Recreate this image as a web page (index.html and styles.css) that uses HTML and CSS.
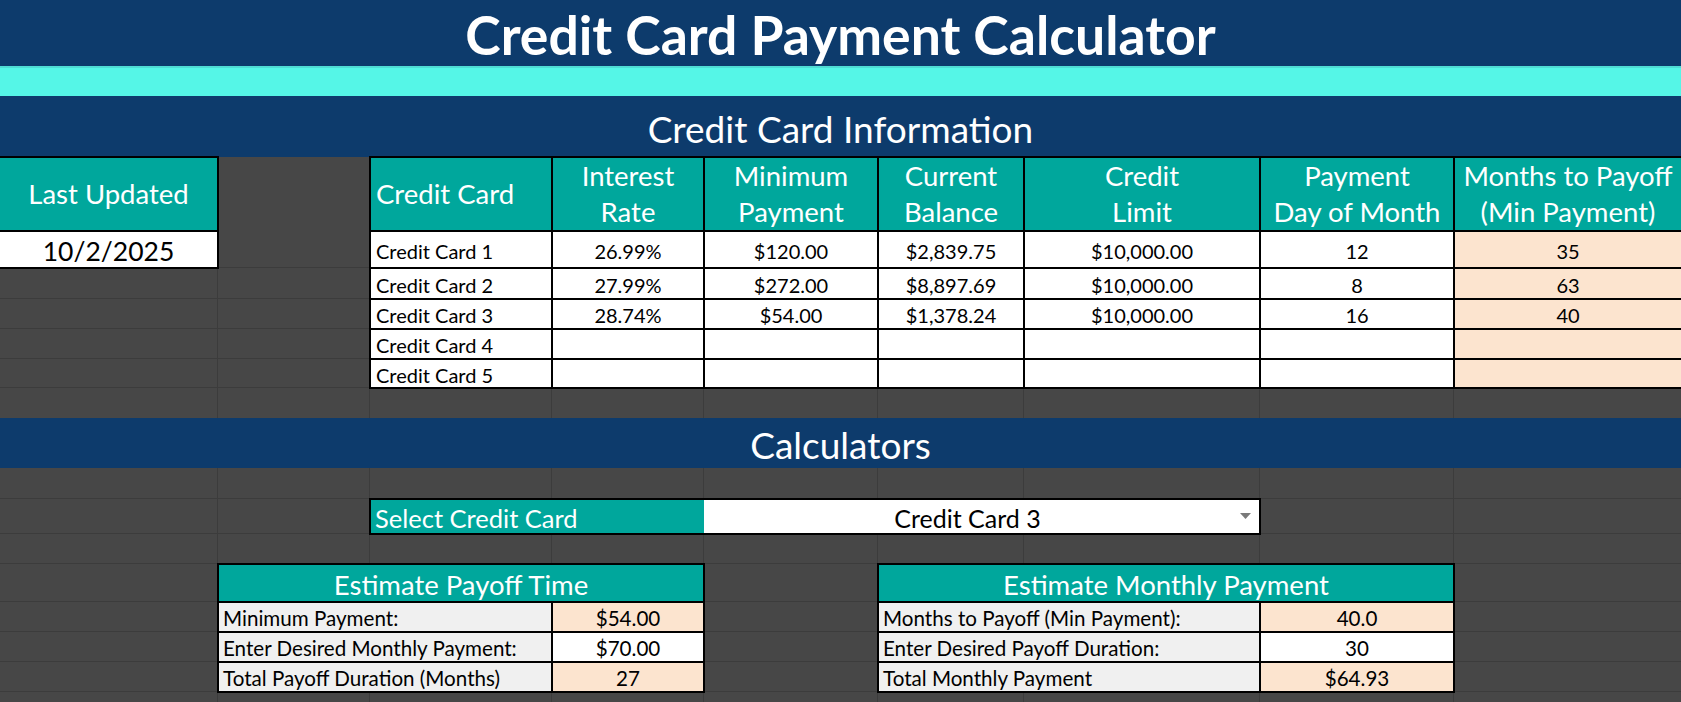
FILE: index.html
```html
<!DOCTYPE html>
<html lang="en">
<head>
<meta charset="utf-8">
<title>Credit Card Payment Calculator</title>
<link rel="stylesheet" href="styles.css">
</head>
<body>
<div class="sheet">
  <div class="title">Credit Card Payment Calculator</div>
  <div class="accent"></div>
  <div class="section section-info">Credit Card Information</div>

  <div class="updated">
    <div class="cell head">Last Updated</div>
    <div class="cell date">10/2/2025</div>
  </div>

  <div class="cards">
    <div class="cell head left">Credit Card</div>
    <div class="cell head">Interest<br>Rate</div>
    <div class="cell head">Minimum<br>Payment</div>
    <div class="cell head">Current<br>Balance</div>
    <div class="cell head">Credit<br>Limit</div>
    <div class="cell head">Payment<br>Day of Month</div>
    <div class="cell head">Months to Payoff<br>(Min Payment)</div>

    <div class="cell data left">Credit Card 1</div>
    <div class="cell data">26.99%</div>
    <div class="cell data">$120.00</div>
    <div class="cell data">$2,839.75</div>
    <div class="cell data">$10,000.00</div>
    <div class="cell data">12</div>
    <div class="cell data calc">35</div>

    <div class="cell data left">Credit Card 2</div>
    <div class="cell data">27.99%</div>
    <div class="cell data">$272.00</div>
    <div class="cell data">$8,897.69</div>
    <div class="cell data">$10,000.00</div>
    <div class="cell data">8</div>
    <div class="cell data calc">63</div>

    <div class="cell data left">Credit Card 3</div>
    <div class="cell data">28.74%</div>
    <div class="cell data">$54.00</div>
    <div class="cell data">$1,378.24</div>
    <div class="cell data">$10,000.00</div>
    <div class="cell data">16</div>
    <div class="cell data calc">40</div>

    <div class="cell data left">Credit Card 4</div>
    <div class="cell data"></div>
    <div class="cell data"></div>
    <div class="cell data"></div>
    <div class="cell data"></div>
    <div class="cell data"></div>
    <div class="cell data calc"></div>

    <div class="cell data left">Credit Card 5</div>
    <div class="cell data"></div>
    <div class="cell data"></div>
    <div class="cell data"></div>
    <div class="cell data"></div>
    <div class="cell data"></div>
    <div class="cell data calc"></div>
  </div>

  <div class="section section-calc">Calculators</div>

  <div class="picker">
    <div class="picker-label">Select Credit Card</div>
    <div class="picker-value">
      <span>Credit Card 3</span>
      <svg class="caret" width="11" height="6" viewBox="0 0 11 6"><polygon points="0,0 11,0 5.5,6" fill="#7a7a7a"/></svg>
    </div>
  </div>

  <div class="calc-box calc-payoff">
    <div class="calc-head">Estimate Payoff Time</div>
    <div class="calc-label">Minimum Payment:</div>
    <div class="calc-value out">$54.00</div>
    <div class="calc-label">Enter Desired Monthly Payment:</div>
    <div class="calc-value">$70.00</div>
    <div class="calc-label">Total Payoff Duration (Months)</div>
    <div class="calc-value out">27</div>
  </div>

  <div class="calc-box calc-monthly">
    <div class="calc-head">Estimate Monthly Payment</div>
    <div class="calc-label">Months to Payoff (Min Payment):</div>
    <div class="calc-value out">40.0</div>
    <div class="calc-label">Enter Desired Payoff Duration:</div>
    <div class="calc-value">30</div>
    <div class="calc-label">Total Monthly Payment</div>
    <div class="calc-value out">$64.93</div>
  </div>
</div>
</body>
</html>
```

FILE: styles.css
```css
html, body {
  margin: 0;
  padding: 0;
  background: #474747;
  overflow: hidden;
}

body {
  width: 1681px;
  height: 702px;
  font-family: Lato, "Open Sans", "Liberation Sans", sans-serif;
}

.sheet {
  display: grid;
  width: 1682px;
  grid-template-columns: 218px 152px 182px 152px 174px 146px 236px 194px 228px;
  grid-template-rows: 66px 30px 61px 74px 37px 31px 30px 30px 29px 30px 50px 31px 35px 30px 38px 30px 30px 30px 30px;
  background-color: #474747;
  background-image:
    linear-gradient(#3c3c3c, #3c3c3c), linear-gradient(#3c3c3c, #3c3c3c),
    linear-gradient(#3c3c3c, #3c3c3c), linear-gradient(#3c3c3c, #3c3c3c),
    linear-gradient(#3c3c3c, #3c3c3c), linear-gradient(#3c3c3c, #3c3c3c),
    linear-gradient(#3c3c3c, #3c3c3c), linear-gradient(#3c3c3c, #3c3c3c),
    linear-gradient(#3c3c3c, #3c3c3c), linear-gradient(#3c3c3c, #3c3c3c),
    linear-gradient(#3c3c3c, #3c3c3c), linear-gradient(#3c3c3c, #3c3c3c),
    linear-gradient(#3c3c3c, #3c3c3c), linear-gradient(#3c3c3c, #3c3c3c),
    linear-gradient(#3c3c3c, #3c3c3c), linear-gradient(#3c3c3c, #3c3c3c),
    linear-gradient(#3c3c3c, #3c3c3c), linear-gradient(#3c3c3c, #3c3c3c),
    linear-gradient(#3c3c3c, #3c3c3c), linear-gradient(#3c3c3c, #3c3c3c),
    linear-gradient(#3c3c3c, #3c3c3c);
  background-repeat: no-repeat;
  background-size:
    1px 100%, 1px 100%, 1px 100%, 1px 100%, 1px 100%, 1px 100%, 1px 100%, 1px 100%,
    100% 1px, 100% 1px, 100% 1px, 100% 1px, 100% 1px, 100% 1px, 100% 1px,
    100% 1px, 100% 1px, 100% 1px, 100% 1px, 100% 1px, 100% 1px;
  background-position:
    217px 0, 369px 0, 551px 0, 703px 0, 877px 0, 1023px 0, 1259px 0, 1453px 0,
    0 267px, 0 298px, 0 328px, 0 358px, 0 387px, 0 467px, 0 498px, 0 533px,
    0 563px, 0 601px, 0 631px, 0 661px, 0 691px;
}

/* banner rows */
.title {
  grid-column: 1 / -1;
  grid-row: 1;
  background: #0d3b6c;
  color: #fff;
  font-weight: 700;
  font-size: 53.5px;
  display: flex;
  align-items: center;
  justify-content: center;
  width: 1681px;
  padding-top: 1px;
  box-sizing: border-box;
}

.accent {
  grid-column: 1 / -1;
  grid-row: 2;
  background: #55f6e7;
  border-top: 2px solid #4fdcd4;
}

.section {
  grid-column: 1 / -1;
  width: 1681px;
  background: #0d3b6c;
  color: #fff;
  font-size: 37px;
  display: flex;
  align-items: center;
  justify-content: center;
}

.section-info {
  grid-row: 3;
  padding-top: 4px;
  box-sizing: border-box;
}

.section-calc {
  grid-row: 11;
  padding-top: 2px;
  box-sizing: border-box;
}

/* generic cells */
.cell {
  display: flex;
  align-items: center;
  justify-content: center;
  text-align: center;
  background: #fff;
  color: #000;
  white-space: nowrap;
}

.cell.head {
  background: #00a79c;
  color: #fff;
  font-size: 27.5px;
  line-height: 36px;
}

.cell.left {
  justify-content: flex-start;
  text-align: left;
  padding-left: 5px;
}

.cell.data {
  font-size: 20px;
  padding-top: 2px;
}

.cell.calc {
  background: #fce4cf;
}

/* last updated box */
.updated {
  grid-column: 1;
  grid-row: 4 / 6;
  margin: -1px -1px -1px 0;
  display: grid;
  grid-template-rows: 72px 35px;
  row-gap: 2px;
  padding: 2px 2px 2px 0;
  background: #000;
}

.updated .date {
  font-size: 26.5px;
  padding-top: 2px;
}

/* credit card table */
.cards {
  grid-column: 3 / -1;
  grid-row: 4 / 10;
  margin: -1px;
  display: grid;
  grid-template-columns: 180px 150px 172px 144px 234px 192px 1fr;
  grid-template-rows: 72px 35px 29px 28px 28px 27px;
  gap: 2px;
  padding: 2px;
  background: #000;
}

/* select card */
.picker {
  grid-column: 3 / 8;
  grid-row: 13;
  margin: -1px;
  padding: 2px;
  background: #000;
  display: grid;
  grid-template-columns: 333px 1fr;
}

.picker-label {
  background: #00a79c;
  color: #fff;
  font-size: 25.5px;
  display: flex;
  align-items: center;
  padding-left: 4px;
  padding-top: 2px;
  white-space: nowrap;
}

.picker-value {
  background: #fff;
  color: #000;
  font-size: 25px;
  display: flex;
  align-items: center;
  justify-content: center;
  position: relative;
  padding-right: 28px;
  padding-top: 2px;
}

.caret {
  position: absolute;
  right: 8px;
  top: 13px;
}

/* calculators */
.calc-box {
  grid-row: 15 / 19;
  margin: -1px;
  padding: 2px;
  gap: 2px;
  background: #000;
  display: grid;
  grid-template-rows: 36px 28px 28px 28px;
}

.calc-payoff {
  grid-column: 2 / 5;
  grid-template-columns: 332px 150px;
}

.calc-monthly {
  grid-column: 6 / 9;
  grid-template-columns: 380px 192px;
}

.calc-head {
  grid-column: 1 / -1;
  background: #00a79c;
  color: #fff;
  font-size: 27.5px;
  display: flex;
  align-items: center;
  justify-content: center;
  padding-top: 2px;
}

.calc-label {
  background: #f0f0f0;
  color: #000;
  font-size: 20.6px;
  display: flex;
  align-items: center;
  padding-left: 4px;
  padding-top: 2px;
  white-space: nowrap;
}

.calc-value {
  background: #fff;
  color: #000;
  font-size: 20.6px;
  display: flex;
  align-items: center;
  justify-content: center;
  padding-top: 2px;
}

.calc-value.out {
  background: #fce4cf;
}
```
